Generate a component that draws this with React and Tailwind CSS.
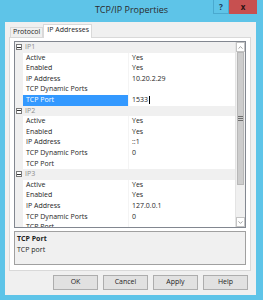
import { ChevronUp, ChevronDown } from "lucide-react";

const rows = [
  { cat: "IP1" },
  { label: "Active", value: "Yes" },
  { label: "Enabled", value: "Yes" },
  { label: "IP Address", value: "10.20.2.29" },
  { label: "TCP Dynamic Ports", value: "" },
  { label: "TCP Port", value: "1533", selected: true },
  { cat: "IP2" },
  { label: "Active", value: "Yes" },
  { label: "Enabled", value: "Yes" },
  { label: "IP Address", value: "::1" },
  { label: "TCP Dynamic Ports", value: "0" },
  { label: "TCP Port", value: "" },
  { cat: "IP3" },
  { label: "Active", value: "Yes" },
  { label: "Enabled", value: "Yes" },
  { label: "IP Address", value: "127.0.0.1" },
  { label: "TCP Dynamic Ports", value: "0" },
  { label: "TCP Port", value: "" },
];

const Row = ({ row }) => {
  if (row.cat) {
    return (
      <div className="h-[10.6px] flex items-center bg-[#f0f0f0] shrink-0">
        <div className="w-[8px] flex items-center justify-center">
          <div className="w-[6px] h-[6px] border border-[#7a7a7a] bg-white flex items-center justify-center">
            <div className="w-[4px] h-px bg-[#333]" />
          </div>
        </div>
        <span className="pl-[2px] text-[#8c8c8c]">{row.cat}</span>
      </div>
    );
  }
  return (
    <div className="h-[10.6px] flex shrink-0">
      <div className="w-[8px] bg-[#f0f0f0]" />
      <div className={`w-[105px] flex items-center pl-[3px] ${row.selected ? "bg-[#3399ff] text-white" : ""}`}>
        {row.label}
      </div>
      <div className="flex-1 flex items-center pl-[3px] border-l border-[#f4f4f4]">
        {row.value}
        {row.selected && <span className="w-px h-[8px] bg-black ml-px" />}
      </div>
    </div>
  );
};

const Btn = ({ children }) => (
  <div className="w-[45px] h-[15px] bg-[#e1e1e1] border border-[#adadad] flex items-center justify-center text-[7px]">
    {children}
  </div>
);

export default function App() {
  return (
    <div className="w-[263px] h-[300px] bg-[#5ec4e8] flex flex-col overflow-hidden relative font-['Open_Sans',sans-serif] text-[#1e1e1e]">
      <div className="h-[22px] flex items-center justify-center text-[9px] text-[#2b2b2b] pb-[2px]">TCP/IP Properties</div>
      <div className="absolute top-0 right-[6px] flex h-[14px]">
        <div className="w-[16px] border-x border-b border-[#4aa9cf] flex items-center justify-center font-bold text-[8px] text-[#1c3b5a]">?</div>
        <div className="w-[28px] bg-[#c75050] flex items-center justify-center font-bold text-[8px] text-[#2b1414]">x</div>
      </div>

      <div className="ml-[5px] mr-[7px] mb-[5px] flex-1 bg-[#f0f0f0] flex flex-col pl-[4px] pr-[5px]">
        <div className="h-[15px] flex items-end text-[7px] pl-px">
          <div className="h-[10px] px-[2px] flex items-center border-x border-t border-[#d9d9d9] bg-[#f0f0f0]">Protocol</div>
          <div className="h-[14px] w-[49px] -mb-px relative z-10 flex items-center pl-[3px] border-x border-t border-[#d9d9d9] bg-white pb-[2px]">IP Addresses</div>
        </div>
        <div className="h-[234px] border border-[#d9d9d9] bg-white flex flex-col px-[4px] pt-[3px] text-[7px]">
          <div className="h-[187px] border border-[#828790] flex">
            <div className="flex-1 flex flex-col overflow-hidden">
              {rows.map((r, i) => (
                <Row key={i} row={r} />
              ))}
            </div>
            <div className="w-[10px] bg-[#f0f0f0] flex flex-col border-l border-[#e4e4e4]">
              <div className="h-[10px] bg-white border border-[#c4c4c4] flex items-center justify-center">
                <ChevronUp size={7} strokeWidth={2} className="text-[#606060]" />
              </div>
              <div className="h-[133px] mx-px bg-[#cdcdcd] border border-[#b8b8b8] flex items-center justify-center">
                <div className="flex flex-col gap-px">
                  <div className="w-[5px] h-px bg-[#6e6e6e]" />
                  <div className="w-[5px] h-px bg-[#6e6e6e]" />
                  <div className="w-[5px] h-px bg-[#6e6e6e]" />
                </div>
              </div>
              <div className="flex-1" />
              <div className="h-[10px] bg-white border border-[#c4c4c4] flex items-center justify-center">
                <ChevronDown size={7} strokeWidth={2} className="text-[#606060]" />
              </div>
            </div>
          </div>
          <div className="mt-[3px] h-[34px] border border-[#a0a0a0] bg-[#f0f0f0] px-[2px] pt-[1px] leading-[11px]">
            <div className="font-bold">TCP Port</div>
            <div>TCP port</div>
          </div>
        </div>
        <div className="mt-[4px] flex justify-end gap-[5px] pr-[3px]">
          <Btn>OK</Btn>
          <Btn>Cancel</Btn>
          <Btn>Apply</Btn>
          <Btn>Help</Btn>
        </div>
      </div>
    </div>
  );
}
